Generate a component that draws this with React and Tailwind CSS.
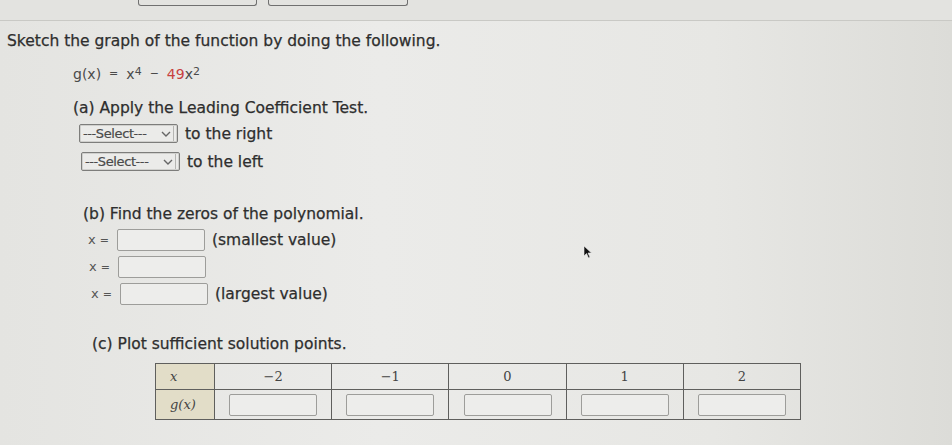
import React from "react";

const font = "font-['DejaVu_Sans','Verdana',sans-serif]";
const txt = "text-[15.5px] leading-[18px] [-webkit-text-stroke:0.25px_#2e2e2e]";

const SelectBox = () => (
    <div className="flex items-center w-[99px] h-[19px] border border-[#7d7d7b] rounded-[2px] bg-[#ebebe9] px-[3px] text-[13px] text-[#4a4a4a] shadow-[inset_0_0_0_1px_#d0d0cd] [-webkit-text-stroke:0.2px_#4a4a4a]">
        <span className="tracking-[-0.4px]">---Select---</span>
        <svg width="10" height="8" viewBox="0 0 10 8" className="ml-auto">
            <path d="M1 2 L5 6 L9 2" fill="none" stroke="#666" strokeWidth="1.4" />
        </svg>
        <span className="ml-[2px] h-[15px] w-px bg-[#b5b5b2]"></span>
    </div>
)

const InputBox = ({ w = "w-[88px]" }) => (
    <div className={`${w} h-[22px] border border-[#9d9d9a] rounded-[2px] bg-[#ededeb]`}></div>
)

const ZeroRow = ({ ml, label }) => (
    <div className={`flex items-center h-[23px] ${ml}`}>
        <span className="text-[13px] text-[#555] w-[29px]">x <span className="text-[11px]">=</span></span>
        <InputBox />
        {label && <span className={`ml-[7px] ${txt}`}>{label}</span>}
    </div>
)

const App = () => {
    const xs = ["\u22122", "\u22121", "0", "1", "2"];
    return (
        <div className={`relative w-[952px] h-[445px] overflow-hidden bg-[linear-gradient(90deg,#e4e4e1_0%,#ebebe9_40%,#e7e7e4_75%,#dcdcd8_100%)] ${font}`}>
            {/* top strip with tabs */}
            <div className="h-[21px] border-b border-[#c9c9c5] bg-[#e3e3e0] flex items-start pl-[138px] gap-[11px]">
                <div className="w-[119px] h-[6px] border border-t-0 border-[#707070] rounded-b-[3px]"></div>
                <div className="w-[140px] h-[6px] border border-t-0 border-[#707070] rounded-b-[3px]"></div>
            </div>

            <div className="pt-[11px] text-[#2e2e2e]">
                <div className={`pl-[7px] ${txt}`}>Sketch the graph of the function by doing the following.</div>

                <div className="pl-[73px] mt-[13px] h-[22px] flex items-center text-[14px] text-[#4a4a4a]">
                    <span>g(x)</span>
                    <span className="mx-[8px] text-[11px]">=</span>
                    <span>x<sup className="text-[11px] relative -top-[4px]">4</sup></span>
                    <span className="mx-[8px] text-[11px]">&minus;</span>
                    <span className="text-[#c8413f]">49</span>
                    <span>x<sup className="text-[11px] relative -top-[4px]">2</sup></span>
                </div>

                <div className={`pl-[73px] mt-[14px] ${txt}`}>(a) Apply the Leading Coefficient Test.</div>

                <div className="pl-[79px] mt-[7px] flex items-center gap-[7px]">
                    <SelectBox />
                    <span className={txt}>to the right</span>
                </div>
                <div className="pl-[81px] mt-[9px] flex items-center gap-[7px]">
                    <SelectBox />
                    <span className={txt}>to the left</span>
                </div>

                <div className={`pl-[83px] mt-[34px] ${txt}`}>(b) Find the zeros of the polynomial.</div>

                <div className="mt-[5px] flex flex-col gap-[4px]">
                    <ZeroRow ml="pl-[88px]" label="(smallest value)" />
                    <ZeroRow ml="pl-[89px]" />
                    <ZeroRow ml="pl-[91px]" label="(largest value)" />
                </div>

                <div className={`pl-[92px] mt-[30px] ${txt}`}>(c) Plot sufficient solution points.</div>

                <div className="ml-[155px] mt-[10px] w-[646px] border border-[#5f5f5d]">
                    <div className="flex h-[26px] border-b border-[#5f5f5d] text-[13px] text-[#444]">
                        <div className="w-[59px] bg-[#e2ddc8] border-r border-[#5f5f5d] flex items-center pl-[14px] font-['DejaVu_Serif',serif] italic">x</div>
                        {xs.map((v, i) => (
                            <div key={i} className={`flex-1 flex items-center justify-center font-['DejaVu_Serif',serif] ${i < 4 ? "border-r border-[#5f5f5d]" : ""}`}>{v}</div>
                        ))}
                    </div>
                    <div className="flex h-[29px] text-[13px] text-[#444]">
                        <div className="w-[59px] bg-[#e2ddc8] border-r border-[#5f5f5d] flex items-center pl-[14px] font-['DejaVu_Serif',serif] italic">g(x)</div>
                        {xs.map((v, i) => (
                            <div key={i} className={`flex-1 flex items-center justify-center ${i < 4 ? "border-r border-[#5f5f5d]" : ""}`}>
                                <InputBox w="w-[88px]" />
                            </div>
                        ))}
                    </div>
                </div>
            </div>

            {/* mouse cursor */}
            <svg className="absolute left-[583px] top-[245px]" width="10" height="14" viewBox="0 0 10 14">
                <path d="M1 1 L1 11 L3.5 8.5 L5.5 13 L7 12.3 L5 8 L8.5 8 Z" fill="#111" stroke="#eee" strokeWidth="0.6" />
            </svg>
        </div>
    )
}

export default App
